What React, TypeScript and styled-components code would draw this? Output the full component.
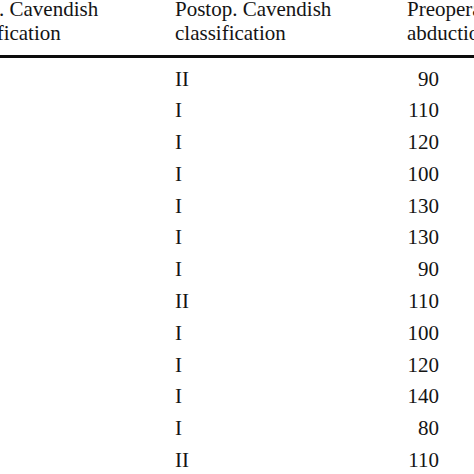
import React from "react";
import styled, { createGlobalStyle } from "styled-components";

const GlobalStyle = createGlobalStyle`
  html, body {
    margin: 0;
    padding: 0;
    background: #ffffff;
  }
  body {
    overflow: hidden;
  }
`;

const Page = styled.div`
  width: 474px;
  height: 474px;
  overflow: hidden;
  background: #ffffff;
`;

// the screenshot is a crop: first column starts left of the frame
const Table = styled.div`
  display: grid;
  grid-template-columns: 225px 232px 160px;
  margin-left: -50px;
  margin-top: -3.5px;
  width: 700px;
  font-family: "Liberation Serif", "Times New Roman", serif;
  font-size: 21px;
  color: #141414;
`;

const HeadCell = styled.div`
  line-height: 24px;
  padding-bottom: 10.5px;
`;

const Rule = styled.div`
  grid-column: 1 / -1;
  height: 3px;
  background: #0c0c0c;
  margin-bottom: 5.5px;
`;

const Cell = styled.div<{ $num?: boolean }>`
  height: 31.8px;
  line-height: 31.8px;
  white-space: nowrap;
  ${(p) => (p.$num ? "width: 32px; text-align: right;" : "")}
`;

const rows: [string, string, number][] = [
  ["", "II", 90],
  ["", "I", 110],
  ["", "I", 120],
  ["", "I", 100],
  ["", "I", 130],
  ["", "I", 130],
  ["", "I", 90],
  ["", "II", 110],
  ["", "I", 100],
  ["", "I", 120],
  ["", "I", 140],
  ["", "I", 80],
  ["", "II", 110],
];

export default function App() {
  return (
    <Page>
      <GlobalStyle />
      <Table>
        <HeadCell>
          Preop. Cavendish
          <br />
          classification
        </HeadCell>
        <HeadCell>
          Postop. Cavendish
          <br />
          classification
        </HeadCell>
        <HeadCell>
          Preoperative
          <br />
          abduction (°)
        </HeadCell>
        <Rule />
        {rows.map(([pre, post, abd], i) => (
          <React.Fragment key={i}>
            <Cell>{pre}</Cell>
            <Cell>{post}</Cell>
            <Cell $num>{abd}</Cell>
          </React.Fragment>
        ))}
      </Table>
    </Page>
  );
}
